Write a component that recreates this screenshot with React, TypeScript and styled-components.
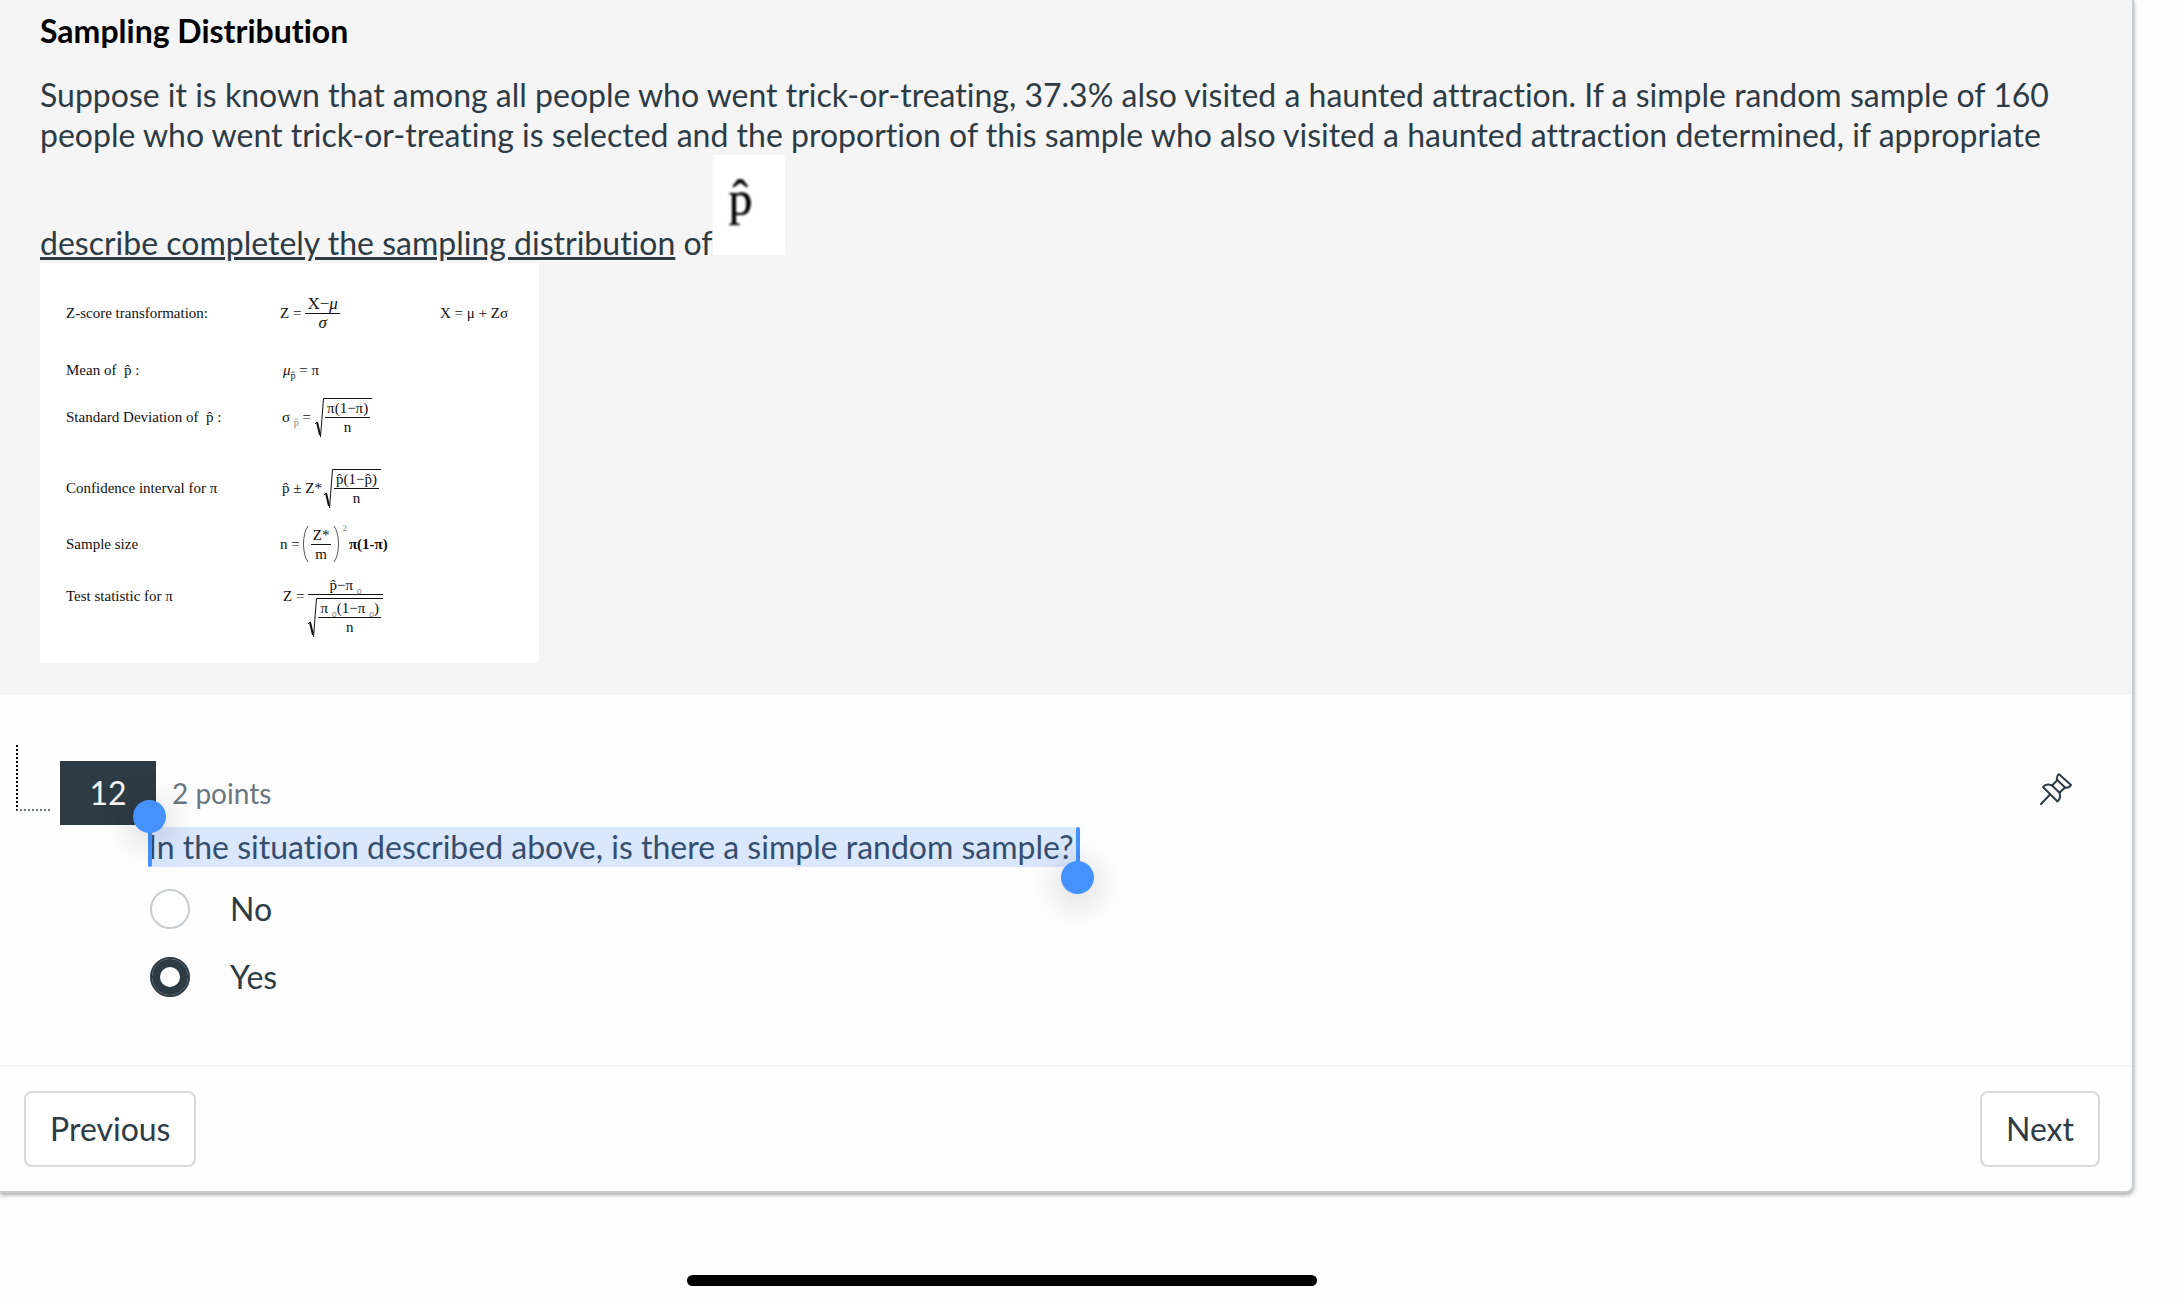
import React, { useState } from "react";
import styled, { createGlobalStyle } from "styled-components";

const ink = "#2d3b45";
const line = "#c7cdd1";
const handleBlue = "#4592ff";

const GlobalStyle = createGlobalStyle`
  *, *::before, *::after { box-sizing: border-box; }
  body {
    margin: 0;
    background: #fefefe;
    color: ${ink};
    font: 32px/40px Lato, "Liberation Sans", sans-serif;
    font-variant-ligatures: none;
  }
`;

const Card = styled.main`
  margin-right: 48px;
  background: #fefefe;
  border-right: 2px solid ${line};
  border-bottom: 2px solid ${line};
  border-bottom-right-radius: 8px;
  box-shadow: 0 2px 4px rgba(0, 0, 0, 0.35);
`;

const Stimulus = styled.section`
  padding: 11px 40px 32px;
  background: #f5f5f5;
`;

const StimulusTitle = styled.h2`
  margin: 0 0 24px;
  color: #000;
  font-size: 32px;
  font-weight: 700;
  line-height: 40px;
`;

const Passage = styled.p`
  margin: 0;
`;

const PHatFigure = styled.span`
  display: inline-block;
  width: 72px;
  height: 100px;
  padding: 16px 0 0 16px;
  overflow: hidden;
  background: #fff;
  color: #000;
  font: 48px/56px "Liberation Serif", serif;
`;

const SoftGlyph = styled.span`
  filter: blur(1px);
  text-shadow: 0 0 1px #000;
`;

const Sheet = styled.div`
  display: flex;
  flex-direction: column;
  width: 499px;
  height: 400px;
  padding: 30px 26px 0;
  background: #fff;
  color: #111;
  font: 15px/18px "Liberation Serif", serif;
`;

const SheetRow = styled.div<{ $before?: number }>`
  display: grid;
  grid-template-columns: 214px 160px 1fr;
  align-items: center;
  height: 40px;
  margin-top: ${(p) => p.$before ?? 0}px;
  white-space: nowrap;
`;

const Formula = styled.span<{ $indent?: number; $top?: boolean; $tight?: boolean }>`
  display: flex;
  align-items: ${(p) => (p.$top ? "flex-start" : "center")};
  gap: ${(p) => (p.$tight ? 2 : 4)}px;
  height: 40px;
  padding-left: ${(p) => p.$indent ?? 0}px;
`;

const Lead = styled.span`
  line-height: 40px;
`;

const Fraction = styled.span`
  display: inline-flex;
  flex-direction: column;
  align-items: stretch;
  text-align: center;
`;

const Over = styled.span<{ $large?: boolean }>`
  height: 19px;
  padding: 0 2px;
  border-bottom: 1px solid #111;
  font-size: ${(p) => (p.$large ? 17 : 15)}px;
`;

const Under = styled.span<{ $large?: boolean }>`
  height: 18px;
  font-size: ${(p) => (p.$large ? 17 : 15)}px;
`;

const RootBox = styled.span`
  display: inline-flex;
  height: 39px;
`;

const RootBody = styled.span`
  padding-right: 2px;
  border-top: 1px solid #111;
`;

const Nested = styled.span`
  display: block;
  padding-top: 3px;
`;

const Sub = styled.sub<{ $faint?: boolean }>`
  font-size: 10px;
  line-height: 0;
  color: ${(p) => (p.$faint ? "#888" : "inherit")};
`;

const Power = styled.sup`
  align-self: flex-start;
  color: #888;
  font-size: 9px;
  line-height: 9px;
`;

const Question = styled.section`
  padding: 50px 60px 68px 16px;
`;

const QuestionHead = styled.header`
  display: flex;
  align-items: flex-start;
  gap: 10px;
`;

const Connector = styled.span`
  width: 34px;
  height: 66px;
  border-left: 2px dotted #000;
  border-bottom: 2px dotted #6b7780;
`;

const HeadLine = styled.div`
  display: flex;
  flex: 1;
  align-items: center;
  gap: 16px;
  padding-top: 16px;
`;

const NumberBadge = styled.span`
  width: 96px;
  background: ${ink};
  color: #f5f5f5;
  line-height: 64px;
  text-align: center;
`;

const Points = styled.span`
  color: #6b7780;
  font-size: 28px;
`;

const PinButton = styled.button`
  display: flex;
  margin: 0 0 8px auto;
  padding: 0;
  border: 0;
  background: none;
  color: ${ink};
  cursor: pointer;
`;

const Answer = styled.fieldset`
  margin: 2px 0 0 132px;
  padding: 0;
  border: 0;
`;

const Prompt = styled.legend`
  padding: 0;
`;

const Selection = styled.span`
  position: relative;
  display: inline-block;
  padding-right: 4px;
  background: #d9e7ff;
  color: #364e6e;
`;

const Handle = styled.span<{ $end?: boolean }>`
  position: absolute;
  top: 0;
  ${(p) => (p.$end ? "right: -2px;" : "left: 0;")}
  width: 4px;
  height: 40px;
  border-radius: 2px;
  background: ${handleBlue};

  &::after {
    content: "";
    position: absolute;
    left: -15px;
    ${(p) => (p.$end ? "top: 34px;" : "bottom: 34px;")}
    width: 33px;
    height: 33px;
    border-radius: 50%;
    background: ${handleBlue};
    box-shadow: 0 6px 36px rgba(0, 0, 0, 0.26);
  }
`;

const Options = styled.div`
  display: grid;
  gap: 28px;
  margin: 22px 0 0 2px;
`;

const Option = styled.label`
  display: flex;
  align-items: center;
  gap: 40px;
  width: fit-content;
  cursor: pointer;
`;

const Radio = styled.input`
  appearance: none;
  width: 40px;
  height: 40px;
  margin: 0;
  border: 2px solid ${line};
  border-radius: 50%;
  background: #fff;

  &:checked {
    border-color: ${ink};
    box-shadow: inset 0 0 0 8px ${ink};
  }
`;

const Footer = styled.footer`
  display: flex;
  justify-content: space-between;
  padding: 24px 32px 24px 24px;
  border-top: 2px solid #f5f5f5;
`;

const NavButton = styled.button`
  padding: 16px 24px;
  border: 2px solid #d9d9d9;
  border-radius: 8px;
  background: #fff;
  color: ${ink};
  font: inherit;
  cursor: pointer;
`;

const HomeArea = styled.div`
  display: flex;
  justify-content: center;
  padding: 82px 178px 15px 0;
`;

const HomeIndicator = styled.span`
  width: 630px;
  height: 11px;
  border-radius: 6px;
  background: #000;
`;

const PHat = () => <>p&#x302;</>;

function Root({ children }: { children: React.ReactNode }) {
  return (
    <RootBox>
      <svg width="10" height="39" viewBox="0 0 10 39" fill="none" stroke="#111">
        <path d="M0 26L2 24" />
        <path d="M2 24L5 37" strokeWidth="2" />
        <path d="M5.5 39L8.5 0.5H10" />
      </svg>
      <RootBody>{children}</RootBody>
    </RootBox>
  );
}

type FracProps = { top: React.ReactNode; bottom: React.ReactNode; large?: boolean };

function Frac({ top, bottom, large }: FracProps) {
  return (
    <Fraction>
      <Over $large={large}>{top}</Over>
      <Under $large={large}>{bottom}</Under>
    </Fraction>
  );
}

function Paren({ flip }: { flip?: boolean }) {
  return (
    <svg width="7" height="38" viewBox="0 0 7 38" fill="none" stroke="#555">
      <path d={flip ? "M1 1C7 9 7 29 1 37" : "M6 1C0 9 0 29 6 37"} />
    </svg>
  );
}

function FormulaSheet() {
  return (
    <Sheet>
      <SheetRow>
        <span>Z-score transformation:</span>
        <Formula>
          <Lead>Z =</Lead>
          <Frac large top={<>X−<i>μ</i></>} bottom={<i>σ</i>} />
        </Formula>
        <span>X = μ + Zσ</span>
      </SheetRow>
      <SheetRow $before={17}>
        <span>Mean of &nbsp;<PHat /> :</span>
        <Formula $indent={3}>
          <span><i>μ</i><Sub><PHat /></Sub> = π</span>
        </Formula>
      </SheetRow>
      <SheetRow $before={7}>
        <span>Standard Deviation of &nbsp;<PHat /> :</span>
        <Formula $indent={2}>
          <span>σ <Sub $faint><PHat /></Sub> =</span>
          <Root><Frac top="π(1−π)" bottom="n" /></Root>
        </Formula>
      </SheetRow>
      <SheetRow $before={31}>
        <span>Confidence interval for π</span>
        <Formula $indent={2} $tight>
          <span><PHat /> ± Z*</span>
          <Root><Frac top={<><PHat />(1−<PHat />)</>} bottom="n" /></Root>
        </Formula>
      </SheetRow>
      <SheetRow $before={16}>
        <span>Sample size</span>
        <Formula $tight>
          <Lead>n =</Lead>
          <Paren />
          <Frac top="Z*" bottom="m" />
          <Paren flip />
          <Power>2</Power>
          <b>π(1-π)</b>
        </Formula>
      </SheetRow>
      <SheetRow $before={12}>
        <span>Test statistic for π</span>
        <Formula $indent={3} $top>
          <Lead>Z =</Lead>
          <Frac
            top={<><PHat />−π <Sub $faint>o</Sub></>}
            bottom={
              <Nested>
                <Root><Frac top={<>π <Sub $faint>o</Sub>(1−π <Sub $faint>o</Sub>)</>} bottom="n" /></Root>
              </Nested>
            }
          />
        </Formula>
      </SheetRow>
    </Sheet>
  );
}

function PinIcon() {
  return (
    <svg width="32" height="32" viewBox="0 0 32 32" fill="none" stroke="currentColor" strokeWidth="2" strokeLinejoin="round" strokeLinecap="round">
      <path d="M1 31L10 21.5" />
      <path d="M3 14C5 11.5 8.500 11 12 12.500L19.500 19.800C20.500 23 20 26.500 17.500 28.500Z" />
      <path d="M12 12.500L17.500 7M19.500 19.800L25 14.500" />
      <path d="M19 1.200L31 12C29.500 14.500 27.500 15 25 14.500L17 6.800C16.500 4.500 17 2.500 19 1.200Z" />
    </svg>
  );
}

const choices = ["No", "Yes"];

export default function App() {
  const [answer, setAnswer] = useState("Yes");
  return (
    <>
      <GlobalStyle />
      <Card>
        <Stimulus>
          <StimulusTitle>Sampling Distribution</StimulusTitle>
          <Passage>
            Suppose it is known that among all people who went trick-or-treating, 37.3% also visited a
            haunted attraction. If a simple random sample of 160 people who went trick-or-treating is
            selected and the proportion of this sample who also visited a haunted attraction determined,
            if appropriate <u>describe completely the sampling distribution</u> of
            <PHatFigure><SoftGlyph><PHat /></SoftGlyph></PHatFigure>
          </Passage>
          <FormulaSheet />
        </Stimulus>
        <Question>
          <QuestionHead>
            <Connector />
            <HeadLine>
              <NumberBadge>12</NumberBadge>
              <Points>2 points</Points>
              <PinButton type="button" aria-label="Pin question"><PinIcon /></PinButton>
            </HeadLine>
          </QuestionHead>
          <Answer>
            <Prompt>
              <Selection>
                In the situation described above, is there a simple random sample?
                <Handle />
                <Handle $end />
              </Selection>
            </Prompt>
            <Options>
              {choices.map((choice) => (
                <Option key={choice}>
                  <Radio
                    type="radio"
                    name="question-12"
                    value={choice}
                    checked={answer === choice}
                    onChange={() => setAnswer(choice)}
                  />
                  {choice}
                </Option>
              ))}
            </Options>
          </Answer>
        </Question>
        <Footer>
          <NavButton type="button">Previous</NavButton>
          <NavButton type="button">Next</NavButton>
        </Footer>
      </Card>
      <HomeArea>
        <HomeIndicator />
      </HomeArea>
    </>
  );
}
